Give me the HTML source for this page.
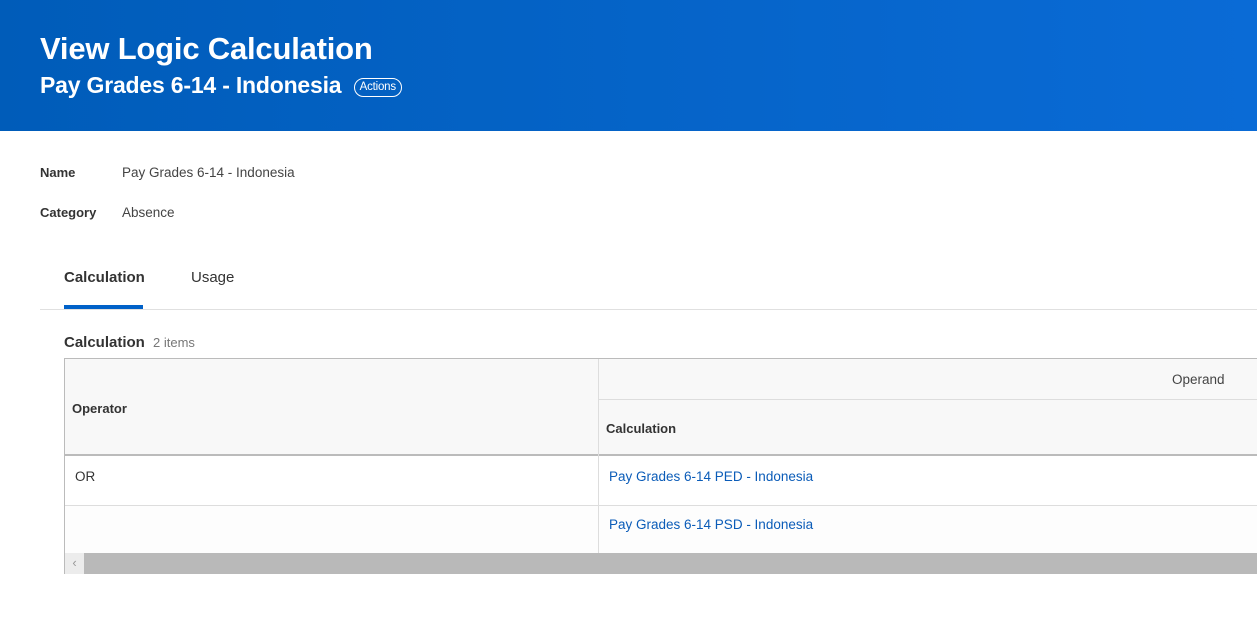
<!DOCTYPE html>
<html><head><meta charset="utf-8"><style>
*{margin:0;padding:0;box-sizing:border-box}
body{width:1257px;height:632px;overflow:hidden;background:#fff;font-family:"Liberation Sans",sans-serif;color:#333;position:relative}
.hdr{position:absolute;left:0;top:0;width:1257px;height:131px;background:linear-gradient(90deg,#005cb9,#0a6bd6)}
.t1{position:absolute;left:40px;top:31px;font-size:31px;font-weight:bold;color:#fff;letter-spacing:-0.2px}
.t2{position:absolute;left:40px;top:72px;font-size:23px;font-weight:bold;color:#fff;letter-spacing:-0.2px}
.act{display:inline-block;vertical-align:3px;margin-left:6px;border:1.5px solid #fff;border-radius:10px;font-size:11.5px;font-weight:normal;padding:0 5px;height:19px;line-height:16px}
.lbl{position:absolute;left:40px;font-size:13px;font-weight:bold;color:#333}
.val{position:absolute;left:122px;font-size:13.5px;color:#444}
.tab{position:absolute;top:269px;font-size:15px;color:#333}
.ul{position:absolute;left:64px;top:305px;width:79px;height:4px;background:#0061c8}
.line{position:absolute;left:40px;top:309px;width:1217px;height:1px;background:#e0e0e0}
.tbl{position:absolute;left:64px;top:358px;width:1193px;height:216px;border:1px solid #bbb;border-right:none;background:#fff}
.c{position:absolute}
a{color:#0b5cb8;text-decoration:none}
</style></head><body>
<div class="hdr"></div>
<div class="t1">View Logic Calculation</div>
<div class="t2">Pay Grades 6-14 - Indonesia <span class="act">Actions</span></div>
<div class="lbl" style="top:165px">Name</div><div class="val" style="top:165px">Pay Grades 6-14 - Indonesia</div>
<div class="lbl" style="top:205px">Category</div><div class="val" style="top:205px">Absence</div>
<div class="tab" style="left:64px;font-weight:bold">Calculation</div>
<div class="tab" style="left:191px">Usage</div>
<div class="ul"></div><div class="line"></div>
<div style="position:absolute;left:64px;top:334px;font-size:15px;font-weight:bold;color:#333">Calculation <span style="font-size:13px;font-weight:normal;color:#777;margin-left:4px">2 items</span></div>
<div class="tbl">
 <div class="c" style="left:0;top:0;width:1193px;height:97px;background:#f8f8f8;border-bottom:2px solid #bbb"></div>
 <div class="c" style="left:533px;top:0;width:1px;height:194px;background:#ddd"></div>
 <div class="c" style="left:534px;top:40px;width:660px;height:1px;background:#ddd"></div>
 <div class="c" style="left:7px;top:42px;font-weight:bold;font-size:13px">Operator</div>
 <div class="c" style="left:1107px;top:13px;font-size:13.5px;color:#444">Operand</div>
 <div class="c" style="left:541px;top:62px;font-weight:bold;font-size:13px">Calculation</div>
 <div class="c" style="left:10px;top:110px;font-size:13.5px">OR</div>
 <div class="c" style="left:544px;top:110px;font-size:13.5px"><a>Pay Grades 6-14 PED - Indonesia</a></div>
 <div class="c" style="left:0;top:146px;width:1193px;height:1px;background:#ddd"></div>
 <div class="c" style="left:0;top:147px;width:1193px;height:47px;background:#fdfdfd"></div>
 <div class="c" style="left:533px;top:147px;width:1px;height:47px;background:#ddd"></div>
 <div class="c" style="left:544px;top:158px;font-size:13.5px"><a>Pay Grades 6-14 PSD - Indonesia</a></div>
 <div class="c" style="left:0;top:194px;width:1193px;height:21px;background:#b9b9b9"></div>
 <div class="c" style="left:0;top:194px;width:19px;height:21px;background:#ececec;color:#999;font-size:13px;text-align:center;line-height:20px">&lsaquo;</div>
</div>
</body></html>
